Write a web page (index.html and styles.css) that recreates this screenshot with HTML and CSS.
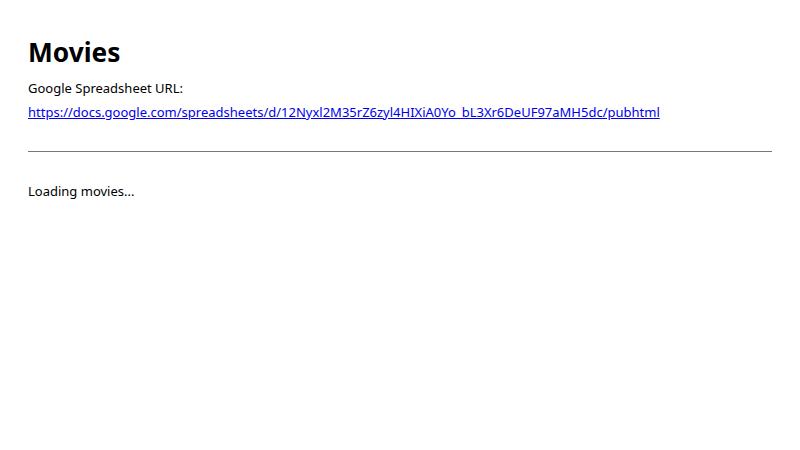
FILE: index.html
```html
<!DOCTYPE html>
<html>
<head>
<meta charset="utf-8">
<link rel="stylesheet" href="styles.css">
</head>
<body>
<div class="page">
  <h1 class="title">Movies</h1>
  <p class="label">Google Spreadsheet URL:</p>
  <p class="url"><a href="#">https://docs.google.com/spreadsheets/d/12Nyxl2M35rZ6zyl4HIXiA0Yo_bL3Xr6DeUF97aMH5dc/pubhtml</a></p>
  <hr class="rule">
  <p class="status">Loading movies...</p>
</div>
</body>
</html>
```
FILE: styles.css
```css
html, body {
  margin: 0;
  padding: 0;
  background: #fff;
}
.page {
  padding: 28px 28px;
  font-family: "Noto Sans", "Open Sans", sans-serif;
  font-size: 13px;
  color: #000;
}
.title {
  font-size: 26.3px;
  font-weight: 700;
  margin: 0;
  line-height: 48px;
}
.label {
  margin: 2px 0 0;
  line-height: 20px;
}
.url {
  margin: 4px 0 0;
  line-height: 20px;
}
.url a {
  color: #0000ee;
}
.rule {
  margin: 29px 0 0;
  border: 0;
  border-top: 1px solid #777;
}
.status {
  margin: 29px 0 0;
  line-height: 20px;
}
```
